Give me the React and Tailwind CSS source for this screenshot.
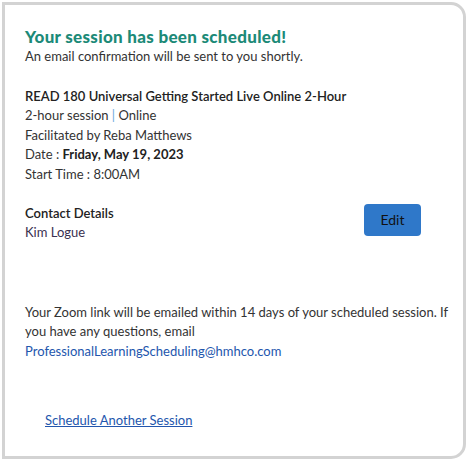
export default function App() {
  return (
    <div className="w-[468px] h-[462px] bg-white p-[2px]" style={{ fontFamily: "Lato, 'Noto Sans', sans-serif" }}>
      <div className="w-[464px] h-[457px] border-[3px] border-[#d3d3d3] rounded-r-[15px] pl-[20px] pr-[14px] pt-[21px] text-[13px] leading-[19.5px] text-[#333333]">
        <h1 className="text-[17px] leading-[21px] font-black text-[#1c8a78] tracking-[0.3px]">Your session has been scheduled!</h1>
        <p>An email confirmation will be sent to you shortly.</p>

        <div className="mt-[20px]">
          <p className="font-semibold text-[#222]">READ 180 Universal Getting Started Live Online 2-Hour</p>
          <p>2-hour session <span className="text-[#6aa8dc]">|</span> Online</p>
          <p>Facilitated by Reba Matthews</p>
          <p>Date : <span className="font-bold text-[#222]">Friday, May 19, 2023</span></p>
          <p>Start Time : 8:00AM</p>
        </div>

        <div className="mt-[19.5px] flex justify-between items-start pr-[28px]">
          <div>
            <p className="font-semibold text-[#222]">Contact Details</p>
            <p className="text-[#3a3050]">Kim Logue</p>
          </div>
          <button className="w-[57px] h-[32px] rounded-[4px] bg-[#2f78c9] text-[#111] text-[14px]">Edit</button>
        </div>

        <div className="mt-[60px]">
          <p>Your Zoom link will be emailed within 14 days of your scheduled session. If you have any questions, email</p>
          <p className="text-[#2356ad]">ProfessionalLearningScheduling@hmhco.com</p>
        </div>

        <div className="mt-[50px] pl-[20px]">
          <a href="#" className="text-[#2356ad] underline">Schedule Another Session</a>
        </div>
      </div>
    </div>
  );
}
